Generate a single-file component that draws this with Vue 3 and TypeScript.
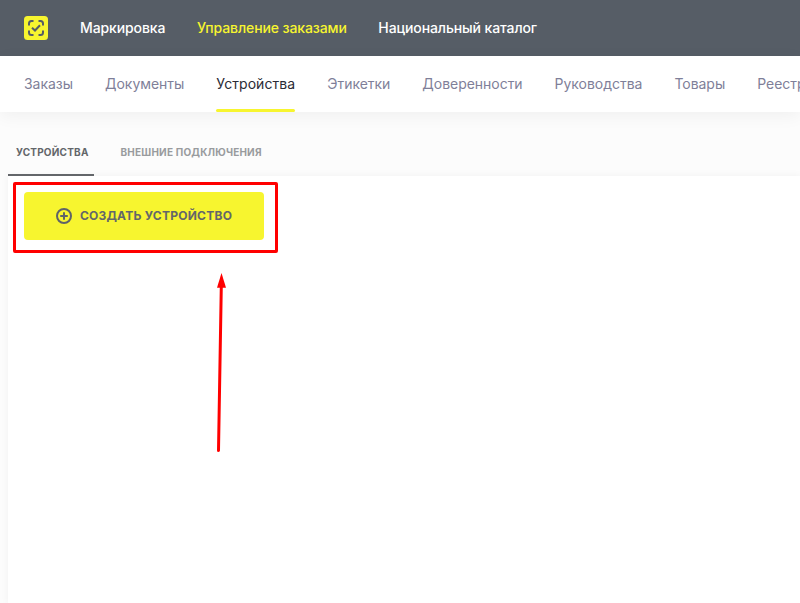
<script setup lang="ts">
import { ref } from 'vue'

const products: string[] = ['Маркировка', 'Управление заказами', 'Национальный каталог']
const sections: string[] = ['Заказы', 'Документы', 'Устройства', 'Этикетки', 'Доверенности', 'Руководства', 'Товары', 'Реестр']
const tabs: string[] = ['Устройства', 'Внешние подключения']

const activeProduct = ref(1)
const activeSection = ref(2)
const activeTab = ref(0)
</script>

<template>
  <div class="page">
    <header class="topbar">
      <svg class="logo" viewBox="0 0 24 24" fill="none">
        <rect width="24" height="24" rx="3.5" fill="#f7f52f" />
        <g stroke="#565d66" stroke-width="2">
          <path d="M5 9.5V7.5Q5 5 7.5 5H9.5M14.5 5H16.5Q19 5 19 7.5V9.5M19 14.5V16.5Q19 19 16.5 19H14.5M9.5 19H7.5Q5 19 5 16.5V14.5" />
          <path d="M8 11.7L11 14.5L16 9.3" />
        </g>
      </svg>
      <nav class="products">
        <a
          v-for="(item, i) in products"
          :key="item"
          class="product"
          :class="{ active: i === activeProduct }"
          @click="activeProduct = i"
        >{{ item }}</a>
      </nav>
    </header>

    <nav class="sections">
      <a
        v-for="(item, i) in sections"
        :key="item"
        class="section"
        :class="{ active: i === activeSection }"
        @click="activeSection = i"
      >{{ item }}</a>
    </nav>

    <main class="content">
      <nav class="tabs">
        <button
          v-for="(item, i) in tabs"
          :key="item"
          class="tab"
          :class="{ active: i === activeTab }"
          @click="activeTab = i"
        >{{ item }}</button>
      </nav>
      <section class="panel">
        <button class="create">
          <svg class="plus" viewBox="0 0 16 16" fill="none" stroke="#5f6368" stroke-width="2">
            <circle cx="8" cy="8" r="7" />
            <path d="M8 4.2V11.8M4.2 8H11.8" />
          </svg>
          <span>Создать устройство</span>
        </button>
      </section>
    </main>

    <div class="highlight"></div>
    <svg class="arrow" viewBox="0 0 12 182">
      <path d="M3.5 178.5L6.3 14" stroke="#ff0000" stroke-width="3" stroke-linecap="round" />
      <path d="M6.5 1L11 15.7H2Z" fill="#ff0000" />
    </svg>
  </div>
</template>

<style>
body {
  margin: 0;
  overflow: hidden;
}
</style>

<style scoped>
.page {
  position: relative;
  display: flex;
  flex-direction: column;
  height: 603px;
  overflow: hidden;
  background: #fcfcfc;
  font-family: Inter, 'Liberation Sans', sans-serif;
}

.topbar {
  display: flex;
  flex: none;
  align-items: center;
  gap: 32px;
  height: 56px;
  padding: 0 24px;
  background: #565d66;
}

.logo {
  flex: none;
  width: 24px;
  height: 24px;
}

.products {
  display: flex;
  gap: 31.6px;
}

.product {
  color: #fff;
  font-size: 14px;
  font-weight: 500;
  letter-spacing: -0.11px;
  line-height: 24px;
  white-space: nowrap;
  cursor: pointer;
}

.product.active {
  color: #f7f52f;
}

.sections {
  position: relative;
  z-index: 1;
  display: flex;
  flex: none;
  gap: 32px;
  height: 56px;
  padding: 0 24px;
  background: #fff;
  box-shadow: 0 4px 16px rgba(0, 0, 0, 0.05);
}

.section {
  display: flex;
  flex: none;
  box-sizing: border-box;
  height: 56px;
  color: #7f7f99;
  font-size: 14px;
  letter-spacing: -0.03px;
  line-height: 56px;
  white-space: nowrap;
  cursor: pointer;
}

.section.active {
  position: relative;
  color: #2b2b35;
  letter-spacing: 0.07px;
}

.section.active::after {
  content: '';
  position: absolute;
  right: 0;
  bottom: 0;
  left: 0;
  height: 3px;
  border-radius: 2px;
  background: #f7f52f;
}

.content {
  display: flex;
  flex: 1;
  flex-direction: column;
  padding: 16px 0 0 8px;
}

.tabs {
  display: flex;
  flex: none;
  gap: 19px;
  height: 48px;
}

.tab {
  box-sizing: border-box;
  height: 48px;
  padding: 2px 5px 0 8px;
  border: 0;
  border-bottom: 2px solid transparent;
  background: none;
  color: #999b9e;
  font-family: inherit;
  font-size: 10px;
  font-weight: 700;
  letter-spacing: 0.2px;
  line-height: 16px;
  text-transform: uppercase;
  white-space: nowrap;
}

.tab.active {
  position: relative;
  z-index: 1;
  border-bottom-color: #63666a;
  color: #63666a;
}

.panel {
  flex: 1;
  padding: 16px;
  background: #fff;
  box-shadow: 0 0 8px rgba(0, 0, 0, 0.05);
}

.create {
  display: flex;
  align-items: center;
  justify-content: center;
  gap: 8px;
  width: 240px;
  height: 48px;
  padding: 0;
  border: 0;
  border-radius: 4px;
  background: #f7f52f;
  color: #63666a;
  font-family: inherit;
  font-size: 12px;
  font-weight: 700;
  letter-spacing: 0.24px;
  line-height: 16px;
  text-transform: uppercase;
  white-space: nowrap;
}

.plus {
  flex: none;
  width: 16px;
  height: 16px;
}

.highlight {
  position: absolute;
  z-index: 2;
  top: 182px;
  left: 13px;
  box-sizing: border-box;
  width: 265px;
  height: 71px;
  border: 3px solid #ff0000;
  border-radius: 2px;
  pointer-events: none;
}

.arrow {
  position: absolute;
  z-index: 2;
  top: 272px;
  left: 215px;
  width: 12px;
  height: 182px;
  pointer-events: none;
}
</style>
